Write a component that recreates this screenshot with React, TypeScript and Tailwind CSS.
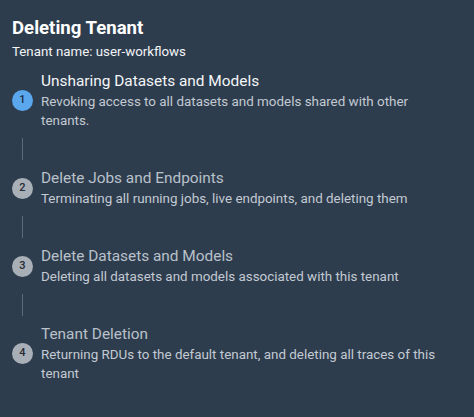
const steps = [
  {
    title: "Unsharing Datasets and Models",
    desc: "Revoking access to all datasets and models shared with other tenants.",
    active: true,
  },
  {
    title: "Delete Jobs and Endpoints",
    desc: "Terminating all running jobs, live endpoints, and deleting them",
    active: false,
  },
  {
    title: "Delete Datasets and Models",
    desc: "Deleting all datasets and models associated with this tenant",
    active: false,
  },
  {
    title: "Tenant Deletion",
    desc: "Returning RDUs to the default tenant, and deleting all traces of this tenant",
    active: false,
  },
];

const App = () => {
  return (
    <div className="h-[417px] w-[474px] overflow-hidden bg-[#2e3d4e] px-3 pt-[15px] font-['Roboto',sans-serif]">
      <h2 className="text-[18.6px] font-bold leading-[26px] text-white">Deleting Tenant</h2>
      <p className="mt-[2px] text-[13.3px] leading-[18px] text-[#f2f4f6]">Tenant name: user-workflows</p>

      <div className="mt-[10px] flex flex-col">
        {steps.map((step, i) => (
          <div key={step.title}>
            {i > 0 && <div className="my-2 ml-[10px] h-[22px] w-px bg-[#5d6a78]" />}
            <div className="flex items-center gap-2">
              <div
                className={
                  step.active
                    ? "flex h-[21px] w-[21px] flex-none items-center justify-center rounded-full bg-[#5aa7ee] text-[11px] font-medium text-[#1d2a3a]"
                    : "flex h-[21px] w-[21px] flex-none items-center justify-center rounded-full bg-[#a9afb6] text-[11px] font-medium text-[#262c33]"
                }
              >
                {i + 1}
              </div>
              <div className="pr-6">
                <p
                  className={
                    step.active
                      ? "text-[15.4px] leading-[21px] text-[#f4f6f8]"
                      : "text-[15.4px] leading-[21px] text-[#b9c1ca]"
                  }
                >
                  {step.title}
                </p>
                <p className="text-[13.4px] leading-[19px] text-[#c3cad2]">{step.desc}</p>
              </div>
            </div>
          </div>
        ))}
      </div>
    </div>
  );
};

export default App;
